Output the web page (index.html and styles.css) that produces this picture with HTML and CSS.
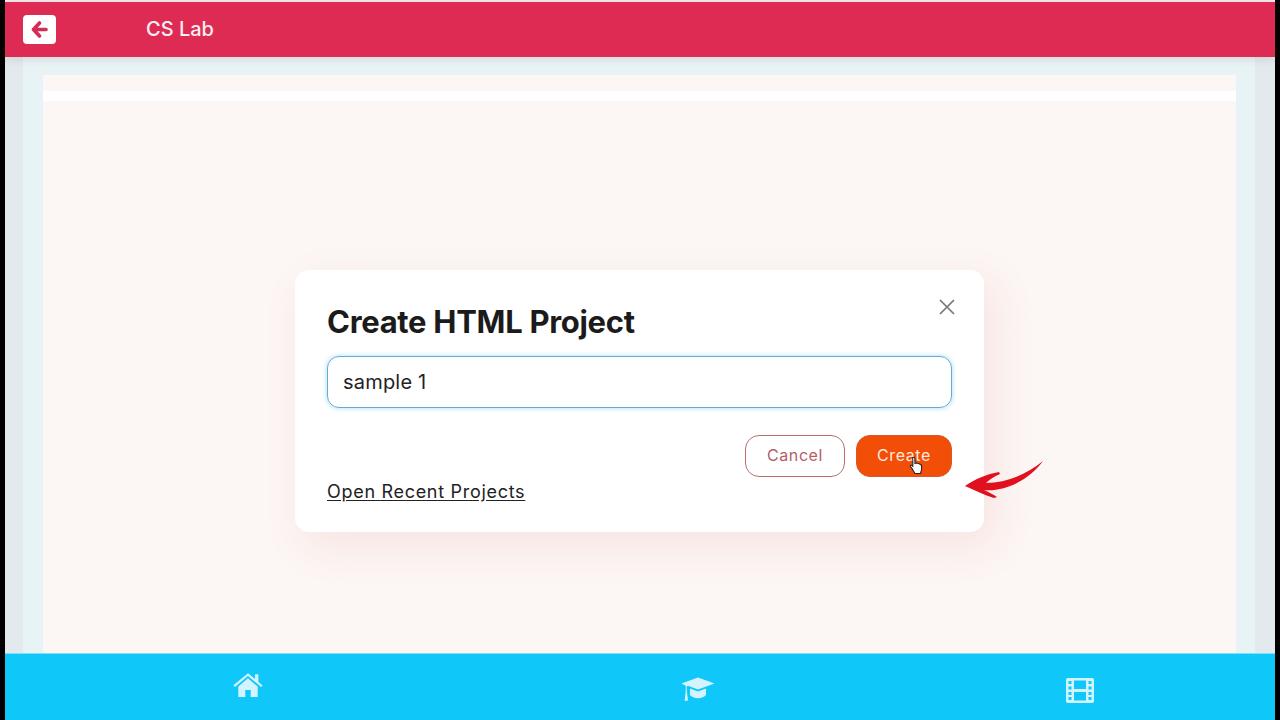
FILE: index.html
```html
<!DOCTYPE html>
<html lang="en">
<head>
<meta charset="utf-8">
<title>CS Lab</title>
<link rel="stylesheet" href="styles.css">
</head>
<body>
<div class="app">
  <header class="topbar">
    <button class="back" aria-label="Back">
      <svg width="17" height="17" viewBox="0 0 17 17"><path d="M8.500 2 2.500 8.500 8.500 15M3.500 8.500H15" fill="none" stroke="#d42c55" stroke-width="3.600" stroke-linecap="round" stroke-linejoin="round"/></svg>
    </button>
    <span class="title">CS Lab</span>
  </header>
  <main class="outer">
    <div class="inner">
      <div class="page">
        <div class="strip"></div>
      </div>
    </div>
  </main>
  <nav class="bottombar">
    <span class="tab tab-home">
      <svg width="30" height="26" viewBox="0 0 30 26"><path fill="#d3f3ff" d="M15 1.200 22 7V2.200h3.400v7.600l4.200 3.600-1.500 1.700L15 3.900 1.900 15 .4 13.300z"/><path fill="#d3f3ff" d="M15 6.300 5.300 14.600V25h7v-7h5.400v7h7V14.600z"/></svg>
    </span>
    <span class="tab tab-cap">
      <svg width="34" height="25" viewBox="0 0 34 25"><path fill="#d3f3ff" d="M17 .5 33.500 6.600 17 12.400 6.800 8.800 5.600 9.800 6 15.200l1 8.600H3.600l1-8.600.2-6.400L.5 6.600z"/><path fill="#d3f3ff" d="M9 11.600 17 14.400l8-2.800v6.200c-1.300 2-4.600 3.400-8 3.400s-6.700-1.300-8-3.200z"/></svg>
    </span>
    <span class="tab tab-film">
      <svg width="28" height="25" viewBox="0 0 28 25"><path fill="#d3f3ff" fill-rule="evenodd" d="M2 0h24a2 2 0 0 1 2 2v21a2 2 0 0 1-2 2H2a2 2 0 0 1-2-2V2a2 2 0 0 1 2-2zM2.500 3v3h3V3zm0 5.500v3h3v-3zm0 5.500v3h3v-3zm0 5v3h3v-3zM22.500 3v3h3V3zm0 5.500v3h3v-3zm0 5.500v3h3v-3zm0 5v3h3v-3zM8 2.500v8.500h12V2.500zM8 14v8.500h12V14z"/></svg>
    </span>
  </nav>
</div>

<section class="modal">
  <button class="close" aria-label="Close">
    <svg width="16" height="16" viewBox="0 0 16 16"><path d="M1 1 15 15M15 1 1 15" stroke="#777" stroke-width="1.700" fill="none"/></svg>
  </button>
  <h1 class="modal-title">Create HTML Project</h1>
  <div class="field">sample 1</div>
  <div class="actions">
    <button class="btn btn-cancel">Cancel</button>
    <button class="btn btn-create">Create</button>
  </div>
  <a class="recent" href="#">Open Recent Projects</a>
</section>

<svg class="arrow" width="82" height="42" viewBox="0 0 82 42">
  <path fill="#e0101e" d="M2 27C12 20 24 15 36 13l1 2C30 18 26 21 23 24 44 24 64 15 80 2 68 19 44 33 21 31 25 33 30 35 34 38l-3 1C21 36 12 31 2 27z"/>
</svg>
<svg class="cursor" width="15" height="19" viewBox="0 0 14 18">
  <path fill="#fff" stroke="#222" stroke-width="1" d="M4 1.200c1 0 1.500.6 1.500 1.500V7l1-.4 1.300.3 1.200.3 1.300.6 1.500 1v4l-1 3.700H5.500L2.800 12 1.200 10c-.4-1 .6-1.600 1.500-1l.8.7V2.700C2.500 1.800 3 1.200 4 1.200z"/>
</svg>
</body>
</html>
```
FILE: styles.css
```css
* { box-sizing: border-box; }
html, body { margin: 0; height: 100%; }
body {
  background: #000;
  overflow: hidden;
  font-family: "Inter", "Liberation Sans", sans-serif;
}
.app {
  height: 720px;
  margin: 0 5px;
  padding-top: 2px;
  display: flex;
  flex-direction: column;
  background: #e2eaee;
  box-shadow: inset 0 2px 0 #f7e9ec;
}
.topbar {
  flex: 0 0 55px;
  background: #dd2b53;
  display: flex;
  align-items: center;
  padding-left: 18px;
  box-shadow: 0 2px 8px rgba(120, 60, 70, 0.16);
  position: relative;
}
.back {
  width: 33px;
  height: 29px;
  background: #fff;
  border: 0;
  border-radius: 4px;
  padding: 0;
  display: flex;
  align-items: center;
  justify-content: center;
}
.title {
  margin-left: 90px;
  margin-top: -2px;
  color: #fbeef1;
  font-size: 20px;
  font-weight: 500;
}
.outer {
  flex: 1;
  padding: 0 20px 0 18px;
  background: #e2eaee;
}
.inner {
  height: 100%;
  padding: 18px 19px 0 20px;
  background: #e8f3f5;
}
.page {
  height: 100%;
  padding-top: 16px;
  background: #fcf6f4;
}
.strip { height: 10px; background: #fff; }
.bottombar {
  flex: 0 0 67px;
  padding-left: 228px;
  display: flex;
  align-items: flex-start;
  background: #10c7fa;
  border-top: 1px solid #7fe0fb;
}
.tab { display: flex; }
.tab-home { margin-top: 18px; }
.tab-cap { margin: 23px 0 0 418px; }
.tab-film { margin: 24px 0 0 351px; }
.modal {
  position: absolute;
  left: 295px;
  top: 270px;
  width: 689px;
  height: 262px;
  padding: 33px 32px 0;
  background: #fff;
  border-radius: 14px;
  box-shadow: 10px 14px 40px rgba(225, 120, 120, 0.14);
}
.close {
  position: absolute;
  right: 29px;
  top: 29px;
  padding: 0;
  border: 0;
  background: none;
  display: flex;
}
.modal-title {
  margin: 0;
  color: #1b1b1b;
  font-size: 31px;
  line-height: 37px;
  font-weight: 700;
  letter-spacing: -0.3px;
}
.field {
  margin-top: 16px;
  height: 52px;
  padding: 0 15px;
  display: flex;
  align-items: center;
  color: #222;
  font-size: 20px;
  letter-spacing: 0.2px;
  border: 1.500px solid #6aa8cc;
  border-radius: 12px;
  box-shadow: 0 0 5px rgba(80, 190, 240, 0.55);
}
.actions {
  margin-top: 27px;
  display: flex;
  justify-content: flex-end;
  gap: 11px;
}
.btn {
  height: 42px;
  border-radius: 14px;
  font-family: "Inter", "Liberation Sans", sans-serif;
  font-size: 16px;
  letter-spacing: 0.6px;
  padding: 0 0 2px;
}
.btn-cancel {
  width: 100px;
  background: #fff;
  border: 1.500px solid #bb6a72;
  color: #b45d66;
}
.btn-create {
  width: 96px;
  background: #f24e08;
  border: 1px solid #d9562e;
  color: #ffe9d9;
}
.recent {
  display: block;
  margin-top: 3px;
  color: #222;
  font-size: 18px;
  letter-spacing: 0.7px;
  line-height: 24px;
  text-underline-offset: 2px;
}
.arrow { position: absolute; left: 963px; top: 459px; }
.cursor { position: absolute; left: 909px; top: 456px; }
```
